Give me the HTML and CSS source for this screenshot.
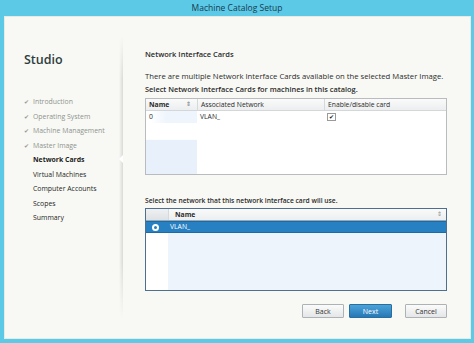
FILE: index.html
```html
<!DOCTYPE html>
<html lang="en">
<head>
  <meta charset="utf-8">
  <title>Machine Catalog Setup</title>
  <link rel="stylesheet" href="styles.css">
</head>
<body>
  <div class="window">
    <div class="titlebar">Machine Catalog Setup</div>
    <div class="frame">
      <div class="sidebar">
        <div class="brand">Studio</div>
        <ul class="steps">
          <li class="done"><span class="tick">&#10004;</span>Introduction</li>
          <li class="done"><span class="tick">&#10004;</span>Operating System</li>
          <li class="done"><span class="tick">&#10004;</span>Machine Management</li>
          <li class="done"><span class="tick">&#10004;</span>Master Image</li>
          <li class="current">Network Cards</li>
          <li>Virtual Machines</li>
          <li>Computer Accounts</li>
          <li>Scopes</li>
          <li>Summary</li>
        </ul>
        <div class="divider"></div>
        <div class="pointer"></div>
      </div>
      <div class="main">
        <h2>Network Interface Cards</h2>
        <p class="intro">There are multiple Network Interface Cards available on the selected Master Image.</p>
        <p class="label">Select Network Interface Cards for machines in this catalog.</p>
        <div class="grid nics">
          <div class="head">
            <div class="col c-name">Name <span class="sort">&#8661;</span></div>
            <div class="col c-net">Associated Network</div>
            <div class="col c-en">Enable/disable card</div>
          </div>
          <div class="row">
            <div class="col c-name">0</div>
            <div class="col c-net">VLAN_</div>
            <div class="col c-en"><span class="check">&#10004;</span></div>
          </div>
          <div class="filler">
            <div class="col c-name"></div>
          </div>
        </div>
        <p class="label second">Select the network that this network interface card will use.</p>
        <div class="grid nets">
          <div class="head">
            <div class="col c-radio"></div>
            <div class="col c-title">Name</div>
            <div class="col c-sort"><span class="sort">&#8661;</span></div>
          </div>
          <div class="row selected">
            <div class="col c-radio"><span class="radio"></span></div>
            <div class="col c-title">VLAN_</div>
          </div>
          <div class="filler">
            <div class="col c-radio"></div>
            <div class="col c-rest"></div>
          </div>
        </div>
        <div class="buttons">
          <button class="btn">Back</button>
          <button class="btn primary">Next</button>
          <button class="btn cancel">Cancel</button>
        </div>
      </div>
    </div>
  </div>
</body>
</html>
```

FILE: styles.css
```css
html, body {
  margin: 0;
  height: 100%;
}

body {
  background-color: #5cc9e7;
  font-family: "Open Sans", "DejaVu Sans", sans-serif;
  color: #2b2b2b;
}

.window {
  height: 343px;
  display: flex;
  flex-direction: column;
}

.titlebar {
  height: 16px;
  line-height: 15px;
  text-align: center;
  font-size: 8.5px;
  color: #163c50;
}

.frame {
  flex: 1;
  margin: 0 3px 4px 4px;
  background-color: #f8f9f4;
  display: flex;
  box-shadow: inset 0 0 0 1px #e6ebe3;
}

.sidebar {
  width: 119px;
  position: relative;
}

.divider {
  position: absolute;
  right: 0;
  top: 20px;
  bottom: 20px;
  width: 4px;
  background: linear-gradient(to right, rgba(0, 0, 0, 0), rgba(0, 0, 0, 0.12));
  -webkit-mask-image: linear-gradient(transparent, #000 15%, #000 80%, transparent);
  mask-image: linear-gradient(transparent, #000 15%, #000 80%, transparent);
}

.brand {
  font-size: 12.5px;
  font-weight: 600;
  color: #2f3d3f;
  padding: 36px 0 0 20px;
  line-height: 16px;
}

.steps {
  list-style: none;
  margin: 27px 0 0 0;
  padding: 0 0 0 20px;
  font-size: 6.9px;
  color: #262626;
}

.steps li {
  height: 14.5px;
  line-height: 14.5px;
  padding-left: 9px;
  position: relative;
  white-space: nowrap;
}

.steps li.done {
  color: #8f938f;
}

.steps li.current {
  font-weight: 700;
  color: #1d1d1d;
}

.tick {
  position: absolute;
  left: 0;
  font-size: 6px;
  color: #939893;
}

.pointer {
  position: absolute;
  right: 0;
  top: 139px;
  width: 0;
  height: 0;
  border-top: 4px solid transparent;
  border-bottom: 4px solid transparent;
  border-right: 4px solid #ffffff;
}

.main {
  flex: 1;
  padding: 33px 0 0 22px;
  font-size: 7.7px;
  line-height: 10px;
}

h2 {
  margin: 0;
  font-size: 7.5px;
  font-weight: 600;
  color: #2b2b2b;
}

.intro {
  margin: 12px 0 0 0;
}

.label {
  margin: 3px 0 0 0;
  font-size: 7.4px;
  font-weight: 600;
}

.label.second {
  margin-top: 21px;
  font-size: 6.7px;
}

.grid {
  width: 302px;
  margin-top: 4px;
  border: 1px solid #b8bcbe;
  background-color: #ffffff;
  display: flex;
  flex-direction: column;
  font-size: 6.8px;
  box-sizing: border-box;
}

.head {
  display: flex;
  height: 12px;
  line-height: 11px;
  background: linear-gradient(#fafafa, #eceeef);
  border-bottom: 1px solid #d4d7d8;
  box-sizing: border-box;
}

.row {
  display: flex;
  height: 12px;
  line-height: 12px;
}

.col {
  padding-left: 3px;
  box-sizing: border-box;
  white-space: nowrap;
}

.head .col + .col {
  border-left: 1px solid #d6d9da;
}

.nics {
  height: 77px;
}

.nics .c-name {
  width: 51px;
  position: relative;
}

.nics .head .c-name {
  font-weight: 700;
}

.nics .c-net {
  width: 127px;
}

.nics .c-en {
  flex: 1;
}

.sort {
  position: absolute;
  right: 6px;
  font-size: 6px;
  color: #8a8e90;
}

.nics .row .c-name {
  background: linear-gradient(to right, #ffffff 0%, #ffffff 10%, #eef5fc 40%);
}

.check {
  display: inline-block;
  width: 7px;
  height: 6px;
  line-height: 6px;
  border: 1px solid #9a9a9a;
  background-color: #ffffff;
  font-size: 6px;
  text-align: center;
  color: #222;
  vertical-align: middle;
}

.nics .filler {
  flex: 1;
  display: flex;
}

.nics .filler .c-name {
  width: 51px;
  background: linear-gradient(#ffffff 0%, #ffffff 32%, #e8f1fb 34%, #e8f1fb 100%);
}

.nets {
  margin-top: 2px;
  border-color: #4f6f8e;
  height: 83px;
}

.nets .head {
  border-bottom-color: #9aa9b6;
}

.nets .c-radio {
  width: 22px;
  position: relative;
}

.nets .head .c-radio {
  background: linear-gradient(#eef0f1, #dfe2e4);
}

.nets .c-title {
  flex: 1;
  font-weight: 700;
  padding-left: 6px;
}

.nets .c-sort {
  width: 12px;
  position: relative;
  border-left: none !important;
}

.nets .c-sort .sort {
  right: 4px;
}

.nets .row.selected {
  background-color: #2680c2;
  color: #ffffff;
  border-top: 1px solid #1d6ba5;
  border-bottom: 1px solid #1d6ba5;
  height: 12px;
  line-height: 10px;
  box-sizing: border-box;
}

.nets .row.selected .c-title {
  font-weight: 400;
  padding-left: 2px;
}

.radio {
  position: absolute;
  left: 6px;
  top: 1.5px;
  width: 3px;
  height: 3px;
  border-radius: 50%;
  background-color: #2680c2;
  border: 2px solid #ffffff;
  box-sizing: content-box;
}

.nets .filler {
  flex: 1;
  display: flex;
}

.nets .filler .c-rest {
  flex: 1;
  background-color: #edf4fb;
}

.buttons {
  display: flex;
  justify-content: flex-end;
  gap: 5px;
  width: 302px;
  margin-top: 13px;
}

.btn {
  width: 42px;
  height: 14px;
  padding: 0;
  font-family: inherit;
  font-size: 7px;
  color: #333;
  border: 1px solid #adb2b5;
  border-radius: 1px;
  background: linear-gradient(#fbfbfb, #e4e6e7);
}

.btn.primary {
  width: 43px;
  color: #ffffff;
  border-color: #2a6e9e;
  background: linear-gradient(#4ba3d9, #2778b6);
}

.btn.cancel {
  margin-left: 8px;
}
```
